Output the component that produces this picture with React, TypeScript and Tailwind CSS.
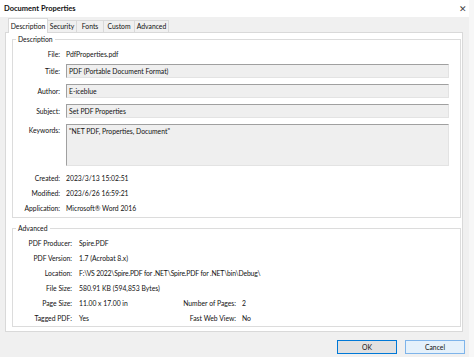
import React from "react";

const tabs = [
  { name: "Description", w: "w-[40px]", active: true },
  { name: "Security", w: "w-[29px]", active: false },
  { name: "Fonts", w: "w-[27px]", active: false },
  { name: "Custom", w: "w-[31px]", active: false },
  { name: "Advanced", w: "w-[34px]", active: false },
];

// sunken read-only text field, like the old WinForms TextBox
function Field({ value, tall }: { value: string; tall?: boolean }) {
  return (
    <div
      className={`w-[383px] border-t border-l border-t-[#a0a0a0] border-l-[#a0a0a0] border-b border-r border-b-[#e3e3e3] border-r-[#e3e3e3] bg-[#efefef] pl-[2px] leading-[12px] ${
        tall ? "h-[42px]" : "h-[14px]"
      }`}
    >
      {value}
    </div>
  );
}

function DescRow({ label, children, className = "" }: { label: string; children: React.ReactNode; className?: string }) {
  return (
    <div className={`flex items-center gap-[6px] ${className}`}>
      <span className="w-[47px] text-right">{label}</span>
      {children}
    </div>
  );
}

function AdvRow({ label, children }: { label: string; children: React.ReactNode }) {
  return (
    <div className="flex h-[15px] items-center gap-[7px]">
      <span className="w-[59px] text-right">{label}</span>
      {children}
    </div>
  );
}

export default function App() {
  return (
    <div className="relative h-[357px] w-[474px] overflow-hidden border-r-[5px] border-r-[#f7f7f7] bg-[#f0f0f0] font-['Lato',sans-serif] text-[6.8px] text-[#111]">
      {/* title bar */}
      <div className="flex h-[17px] items-center justify-between bg-white pl-[4px] pr-[2px]">
        <span className="text-[7.5px] font-bold">Document Properties</span>
        <span className="text-[9px] leading-none text-[#444]">✕</span>
      </div>

      {/* tab strip */}
      <div className="ml-[8px] mt-[1px] flex h-[14px] items-end">
        {tabs.map((t) =>
          t.active ? (
            <div
              key={t.name}
              className={`${t.w} relative z-10 -mb-[1px] flex h-[15px] items-center justify-center border border-b-0 border-[#d9d9d9] bg-white`}
            >
              {t.name}
            </div>
          ) : (
            <div
              key={t.name}
              className={`${t.w} flex h-[12px] items-center justify-center border border-l-0 border-b-0 border-[#d9d9d9] bg-[#f0f0f0]`}
            >
              {t.name}
            </div>
          )
        )}
      </div>

      {/* tab page */}
      <div className="ml-[5px] w-[458px] border border-[#d9d9d9] bg-white pb-[4px]">
        <fieldset className="ml-[6px] w-[449px] border border-[#dcdcdc] pb-[2px]">
          <legend className="ml-[3px] px-[2px] leading-[12px]">Description</legend>
          <DescRow label="File:" className="mt-[2px] h-[14px]">
            <span>PdfProperties.pdf</span>
          </DescRow>
          <DescRow label="Title:" className="mt-[3px]">
            <Field value="PDF (Portable Document Format)" />
          </DescRow>
          <DescRow label="Author:" className="mt-[6px]">
            <Field value="E-iceblue" />
          </DescRow>
          <DescRow label="Subject:" className="mt-[6px]">
            <Field value="Set PDF Properties" />
          </DescRow>
          <div className="mt-[6px] flex items-start gap-[6px]">
            <span className="w-[47px] text-right leading-[12px]">Keywords:</span>
            <Field value={'"NET PDF, Properties, Document"'} tall />
          </div>
          <DescRow label="Created:" className="mt-[5px] h-[14px]">
            <span>2023/3/13 15:02:51</span>
          </DescRow>
          <DescRow label="Modified:" className="mt-[1px] h-[14px]">
            <span>2023/6/26 16:59:21</span>
          </DescRow>
          <DescRow label="Application:" className="mt-[1px] h-[14px]">
            <span>Microsoft® Word 2016</span>
          </DescRow>
        </fieldset>

        <fieldset className="ml-[6px] mt-[4px] w-[449px] border border-[#dcdcdc]">
          <legend className="ml-[3px] px-[2px] leading-[12px]">Advanced</legend>
          <div className="mt-[2px]">
            <AdvRow label="PDF Producer:">
              <span>Spire.PDF</span>
            </AdvRow>
            <AdvRow label="PDF Version:">
              <span>1.7 (Acrobat 8.x)</span>
            </AdvRow>
            <AdvRow label="Location:">
              <span className="tracking-[-0.15px]">F:\VS 2022\Spire.PDF for .NET\Spire.PDF for .NET\bin\Debug\</span>
            </AdvRow>
            <AdvRow label="File Size:">
              <span>580.91 KB (594,853 Bytes)</span>
            </AdvRow>
            <AdvRow label="Page Size:">
              <span className="w-[90px]">11.00 x 17.00 in</span>
              <span className="-ml-[7px] w-[67px] text-right">Number of Pages:</span>
              <span className="-ml-[1px]">2</span>
            </AdvRow>
            <AdvRow label="Tagged PDF:">
              <span className="w-[90px]">Yes</span>
              <span className="-ml-[7px] w-[67px] text-right">Fast Web View:</span>
              <span className="-ml-[1px]">No</span>
            </AdvRow>
          </div>
        </fieldset>
      </div>

      {/* buttons */}
      <div className="mr-[4px] mt-[8px] flex justify-end gap-[8px]">
        <button className="h-[14px] w-[60px] border border-[#0078d7] bg-[#e1e1e1] leading-none">OK</button>
        <button className="h-[14px] w-[60px] border border-[#7eb4ea] bg-[#e5f1fb] leading-none">Cancel</button>
      </div>
    </div>
  );
}
